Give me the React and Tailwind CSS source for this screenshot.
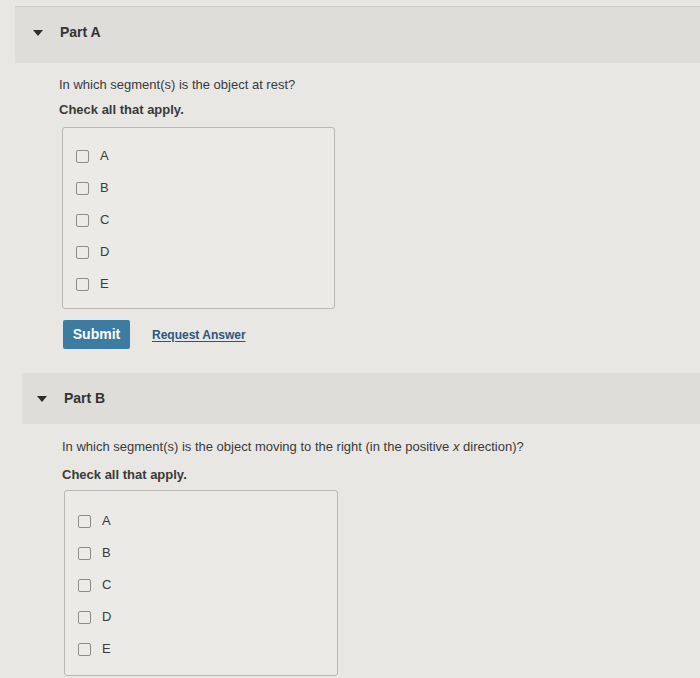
import React from "react";

const font = { fontFamily: '"Liberation Sans", Arial, sans-serif' };

function Tri() {
  return (
    <svg width="10" height="6" viewBox="0 0 10 6" className="shrink-0">
      <path d="M0 0 L10 0 L5 6 Z" fill="#2e2e2e" />
    </svg>
  );
}

function Options({ letters, pt }) {
  return (
    <div className={`flex flex-col gap-[12px] ${pt} pl-[13px]`}>
      {letters.map((l) => (
        <div key={l} className="flex h-[20px] items-center gap-[11px]">
          <span className="block h-[13px] w-[13px] rounded-[2px] border-[1.5px] border-[#8d8c89] bg-[#ecebe8]" />
          <span className="text-[13px] text-[#3a3a3a]">{l}</span>
        </div>
      ))}
    </div>
  );
}

const letters = ["A", "B", "C", "D", "E"];

export default function App() {
  return (
    <div className="min-h-[678px] h-[678px] overflow-hidden bg-[#e8e7e4] pt-[6px]" style={font}>
      {/* Part A */}
      <div className="ml-[15px] border-t border-[#cdccc9]">
        <div className="flex h-[56px] items-center bg-[#dedddA] pb-[5px] pl-[18px]">
          <Tri />
          <span className="ml-[17px] text-[14px] font-bold text-[#333]">Part A</span>
        </div>
        <div className="pl-[44px] pt-[12px]">
          <div className="text-[13px] leading-[20px] text-[#3a3a3a]">In which segment(s) is the object at rest?</div>
          <div className="mt-[5px] text-[13px] font-bold leading-[20px] text-[#3a3a3a]">Check all that apply.</div>
          <div className="ml-[3px] mt-[7px] h-[182px] w-[273px] rounded-[3px] border border-[#b9b8b5] bg-[#ebeae7]">
            <Options letters={letters} pt="pt-[18px]" />
          </div>
          <div className="ml-[4px] mt-[11px] flex items-center gap-[22px]">
            <button className="h-[29px] w-[67px] rounded-[2px] bg-[#3c7ba2] text-[14px] font-bold text-white">Submit</button>
            <span className="text-[12px] font-bold text-[#2c5680] underline underline-offset-2">Request Answer</span>
          </div>
        </div>
      </div>

      {/* Part B */}
      <div className="ml-[22px] mt-[24px]">
        <div className="flex h-[51px] items-center bg-[#dedddA] pl-[15px]">
          <Tri />
          <span className="ml-[17px] text-[14px] font-bold text-[#333]">Part B</span>
        </div>
        <div className="pl-[40px] pt-[13px]">
          <div className="text-[13px] leading-[20px] text-[#3a3a3a]">
            In which segment(s) is the object moving to the right (in the positive <i>x</i> direction)?
          </div>
          <div className="mt-[8px] text-[13px] font-bold leading-[20px] text-[#3a3a3a]">Check all that apply.</div>
          <div className="ml-[2px] mt-[5px] h-[186px] w-[274px] rounded-[3px] border border-[#b9b8b5] bg-[#ebeae7]">
            <Options letters={letters} pt="pt-[20px]" />
          </div>
        </div>
      </div>
    </div>
  );
}
